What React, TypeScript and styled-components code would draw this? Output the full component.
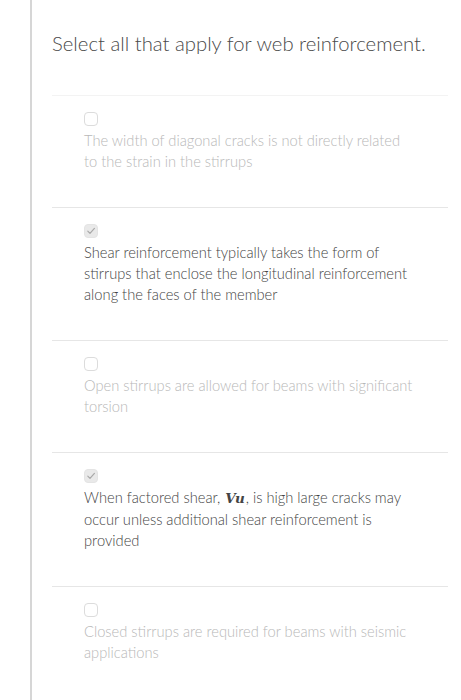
import styled, { createGlobalStyle } from 'styled-components';

const GlobalStyle = createGlobalStyle`
  html, body {
    margin: 0;
    padding: 0;
    background: #fff;
  }
  body {
    font-family: Lato, "Open Sans", sans-serif;
  }
`;

const Panel = styled.div`
  margin-left: 30px;
  min-height: 700px;
  border-left: 2px solid #d6d6d6;
  padding: 31px 13px 0 20px;
  box-sizing: border-box;
`;

const Title = styled.h2`
  margin: 0 0 40px;
  font-size: 20.3px;
  line-height: 24px;
  font-weight: 300;
  color: #4a4a4a;
`;

const List = styled.ul`
  list-style: none;
  margin: 0;
  padding: 0;
`;

const Item = styled.li<{ $first?: boolean }>`
  display: flex;
  flex-direction: column;
  gap: 4px;
  padding: 16px 0 35px 32px;
  border-top: 1px solid ${({ $first }) => ($first ? '#f3f3f3' : '#e6e6e6')};
`;

const Box = styled.span<{ $checked: boolean }>`
  width: 14px;
  height: 14px;
  box-sizing: border-box;
  border-radius: 4px;
  border: 1px solid ${({ $checked }) => ($checked ? '#e4e4e4' : '#dcdcdc')};
  background: ${({ $checked }) => ($checked ? '#e9e9e9' : '#fff')};
  display: flex;
  align-items: center;
  justify-content: center;
`;

const Label = styled.p<{ $checked: boolean }>`
  margin: 0;
  font-size: 14.7px;
  line-height: 21px;
  font-weight: 300;
  color: ${({ $checked }) => ($checked ? '#444' : '#b8b8b8')};
  max-width: 330px;
`;

const MathVar = styled.span`
  font-family: "DejaVu Serif", "Liberation Serif", serif;
  font-style: italic;
  font-weight: 700;
  font-size: 13.5px;
  color: #444;
  padding: 0 1px;
`;

function Check() {
  return (
    <svg width="10" height="10" viewBox="0 0 10 10">
      <path d="M1.8 5.2 L4 7.4 L8.4 2.4" fill="none" stroke="#a8a8a8" strokeWidth="1.2" strokeLinecap="round" strokeLinejoin="round" />
    </svg>
  );
}

const options: { checked: boolean; text: React.ReactNode }[] = [
  { checked: false, text: 'The width of diagonal cracks is not directly related to the strain in the stirrups' },
  {
    checked: true,
    text: 'Shear reinforcement typically takes the form of stirrups that enclose the longitudinal reinforcement along the faces of the member',
  },
  { checked: false, text: 'Open stirrups are allowed for beams with significant torsion' },
  {
    checked: true,
    text: (
      <>
        When factored shear, <MathVar>Vu</MathVar>, is high large cracks may occur unless additional shear reinforcement is provided
      </>
    ),
  },
  { checked: false, text: 'Closed stirrups are required for beams with seismic applications' },
];

export default function App() {
  return (
    <>
      <GlobalStyle />
      <Panel>
        <Title>Select all that apply for web reinforcement.</Title>
        <List>
          {options.map((o, i) => (
            <Item key={i} $first={i === 0}>
              <Box $checked={o.checked}>{o.checked && <Check />}</Box>
              <Label $checked={o.checked}>{o.text}</Label>
            </Item>
          ))}
        </List>
      </Panel>
    </>
  );
}
